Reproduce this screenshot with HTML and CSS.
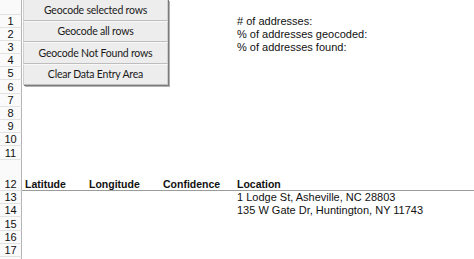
FILE: index.html
```html
<!DOCTYPE html>
<html>
<head>
<meta charset="utf-8">
<link rel="stylesheet" href="styles.css">
</head>
<body>
<div class="sheet">
  <div class="row r0"><div class="hdr"></div><div class="c"></div><div class="c"></div><div class="c"></div><div class="c"></div></div>
  <div class="row"><div class="hdr">1</div><div class="c"></div><div class="c"></div><div class="c"></div><div class="c">#&nbsp;of addresses:</div></div>
  <div class="row"><div class="hdr">2</div><div class="c"></div><div class="c"></div><div class="c"></div><div class="c">% of addresses geocoded:</div></div>
  <div class="row"><div class="hdr">3</div><div class="c"></div><div class="c"></div><div class="c"></div><div class="c">% of addresses found:</div></div>
  <div class="row"><div class="hdr">4</div></div>
  <div class="row"><div class="hdr">5</div></div>
  <div class="row"><div class="hdr">6</div></div>
  <div class="row"><div class="hdr">7</div></div>
  <div class="row"><div class="hdr">8</div></div>
  <div class="row"><div class="hdr">9</div></div>
  <div class="row"><div class="hdr">10</div></div>
  <div class="row"><div class="hdr">11</div></div>
  <div class="row tall"><div class="hdr">12</div><div class="c b">Latitude</div><div class="c b">Longitude</div><div class="c b">Confidence</div><div class="c b">Location</div></div>
  <div class="row"><div class="hdr">13</div><div class="c"></div><div class="c"></div><div class="c"></div><div class="c">1 Lodge St, Asheville, NC 28803</div></div>
  <div class="row"><div class="hdr">14</div><div class="c"></div><div class="c"></div><div class="c"></div><div class="c">135 W Gate Dr, Huntington, NY 11743</div></div>
  <div class="row"><div class="hdr">15</div></div>
  <div class="row"><div class="hdr">16</div></div>
  <div class="row"><div class="hdr">17</div></div>
  <div class="row"><div class="hdr"></div></div>
</div>
<div class="buttons">
  <div class="btn">Geocode selected rows</div>
  <div class="btn">Geocode all rows</div>
  <div class="btn">Geocode Not Found rows</div>
  <div class="btn">Clear Data Entry Area</div>
</div>
</body>
</html>
```
FILE: styles.css
```css
html, body {
  margin: 0;
  padding: 0;
  background: #ffffff;
  overflow: hidden;
}
body {
  width: 474px;
  height: 259px;
  position: relative;
  font-family: "Liberation Sans", Arial, sans-serif;
  color: #111;
}
.sheet {
  display: flex;
  flex-direction: column;
}
.row {
  display: grid;
  grid-template-columns: 22px 64px 74px 74px 1fr;
  height: 13.2px;
}
.row.r0 {
  height: 14.5px;
}
.row.tall {
  height: 31.5px;
}
.hdr {
  box-sizing: border-box;
  border-right: 1px solid #b4b4b4;
  border-bottom: 1px solid #e2e2e2;
  background: #fafafa;
  font-size: 11px;
  line-height: 12px;
  text-align: center;
  display: flex;
  align-items: flex-end;
  justify-content: center;
}
.tall .hdr {
  line-height: 11px;
}
.c {
  font-size: 11px;
  line-height: 13px;
  padding-left: 3px;
  white-space: nowrap;
  display: flex;
  align-items: flex-end;
}
.tall .c {
  border-bottom: 1px solid #9c9c9c;
  box-sizing: border-box;
  line-height: 12px;
}
.c.b {
  font-weight: bold;
  font-size: 10.5px;
}
.buttons {
  position: absolute;
  left: 23px;
  top: -1px;
  width: 145px;
  display: flex;
  flex-direction: column;
  box-shadow: 1px 1px 0 #7c7c7c, 2px 2px 0 #b0b0b0;
}
.btn {
  box-sizing: border-box;
  height: 21.5px;
  background: #ededed;
  border: 1px solid #cfcfcf;
  border-top-color: #f8f8f8;
  border-bottom-color: #bdbdbd;
  font-family: Lato, "Open Sans", sans-serif;
  font-size: 10.5px;
  letter-spacing: -0.2px;
  color: #1a1a1a;
  display: flex;
  align-items: center;
  justify-content: center;
}
```
